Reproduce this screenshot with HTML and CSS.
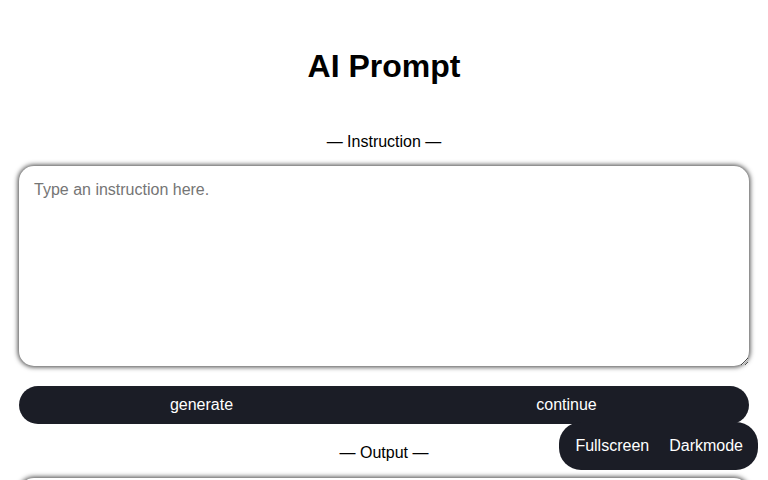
FILE: index.html
```html
<!DOCTYPE html>
<html lang="en">
<head>
<meta charset="utf-8">
<title>AI Prompt</title>
<link rel="stylesheet" href="styles.css">
</head>
<body>
<main class="page">
  <h1 class="title">AI Prompt</h1>
  <div class="label">— Instruction —</div>
  <textarea class="box" placeholder="Type an instruction here."></textarea>
  <div class="actions">
    <button class="action">generate</button>
    <button class="action">continue</button>
  </div>
  <div class="label">— Output —</div>
  <textarea class="box"></textarea>
</main>
<div class="floating">
  <button class="fbtn">Fullscreen</button>
  <button class="fbtn">Darkmode</button>
</div>
</body>
</html>
```
FILE: styles.css
```css
html, body {
  margin: 0;
  padding: 0;
  background: #ffffff;
  font-family: "Liberation Sans", Arial, sans-serif;
  color: #000;
}
.page {
  padding: 48px 19px 0;
  display: flex;
  flex-direction: column;
}
.title {
  margin: 0;
  font-size: 32px;
  font-weight: bold;
  text-align: center;
  line-height: 37px;
}
.label {
  text-align: center;
  font-size: 16px;
  line-height: 18px;
  margin-top: 48px;
  margin-bottom: 15px;
}
.actions + .label {
  margin-top: 20px;
  margin-bottom: 16px;
}
.box {
  display: block;
  box-sizing: border-box;
  width: 100%;
  height: 200px;
  border: none;
  border-radius: 15px;
  padding: 15px 15px;
  font-family: "Liberation Sans", Arial, sans-serif;
  font-size: 16px;
  background: #fff;
  box-shadow: 0 0 5px 1px rgba(0, 0, 0, 0.75);
  resize: vertical;
  outline: none;
}
.box::placeholder {
  color: #757575;
}
.actions {
  display: flex;
  margin-top: 20px;
  background: #1b1d26;
  border-radius: 19px;
  height: 38px;
}
.action {
  flex: 1;
  background: transparent;
  border: none;
  color: #fff;
  font-family: "Liberation Sans", Arial, sans-serif;
  font-size: 16px;
  padding: 0;
  cursor: pointer;
}
.floating {
  position: fixed;
  right: 10px;
  bottom: 10px;
  height: 48px;
  display: flex;
  align-items: center;
  gap: 20px;
  padding: 0 15px 0 16px;
  background: #1b1d26;
  border-radius: 22px;
}
.fbtn {
  background: transparent;
  border: none;
  color: #fff;
  font-family: "Liberation Sans", Arial, sans-serif;
  font-size: 16px;
  padding: 0;
  cursor: pointer;
}
```
